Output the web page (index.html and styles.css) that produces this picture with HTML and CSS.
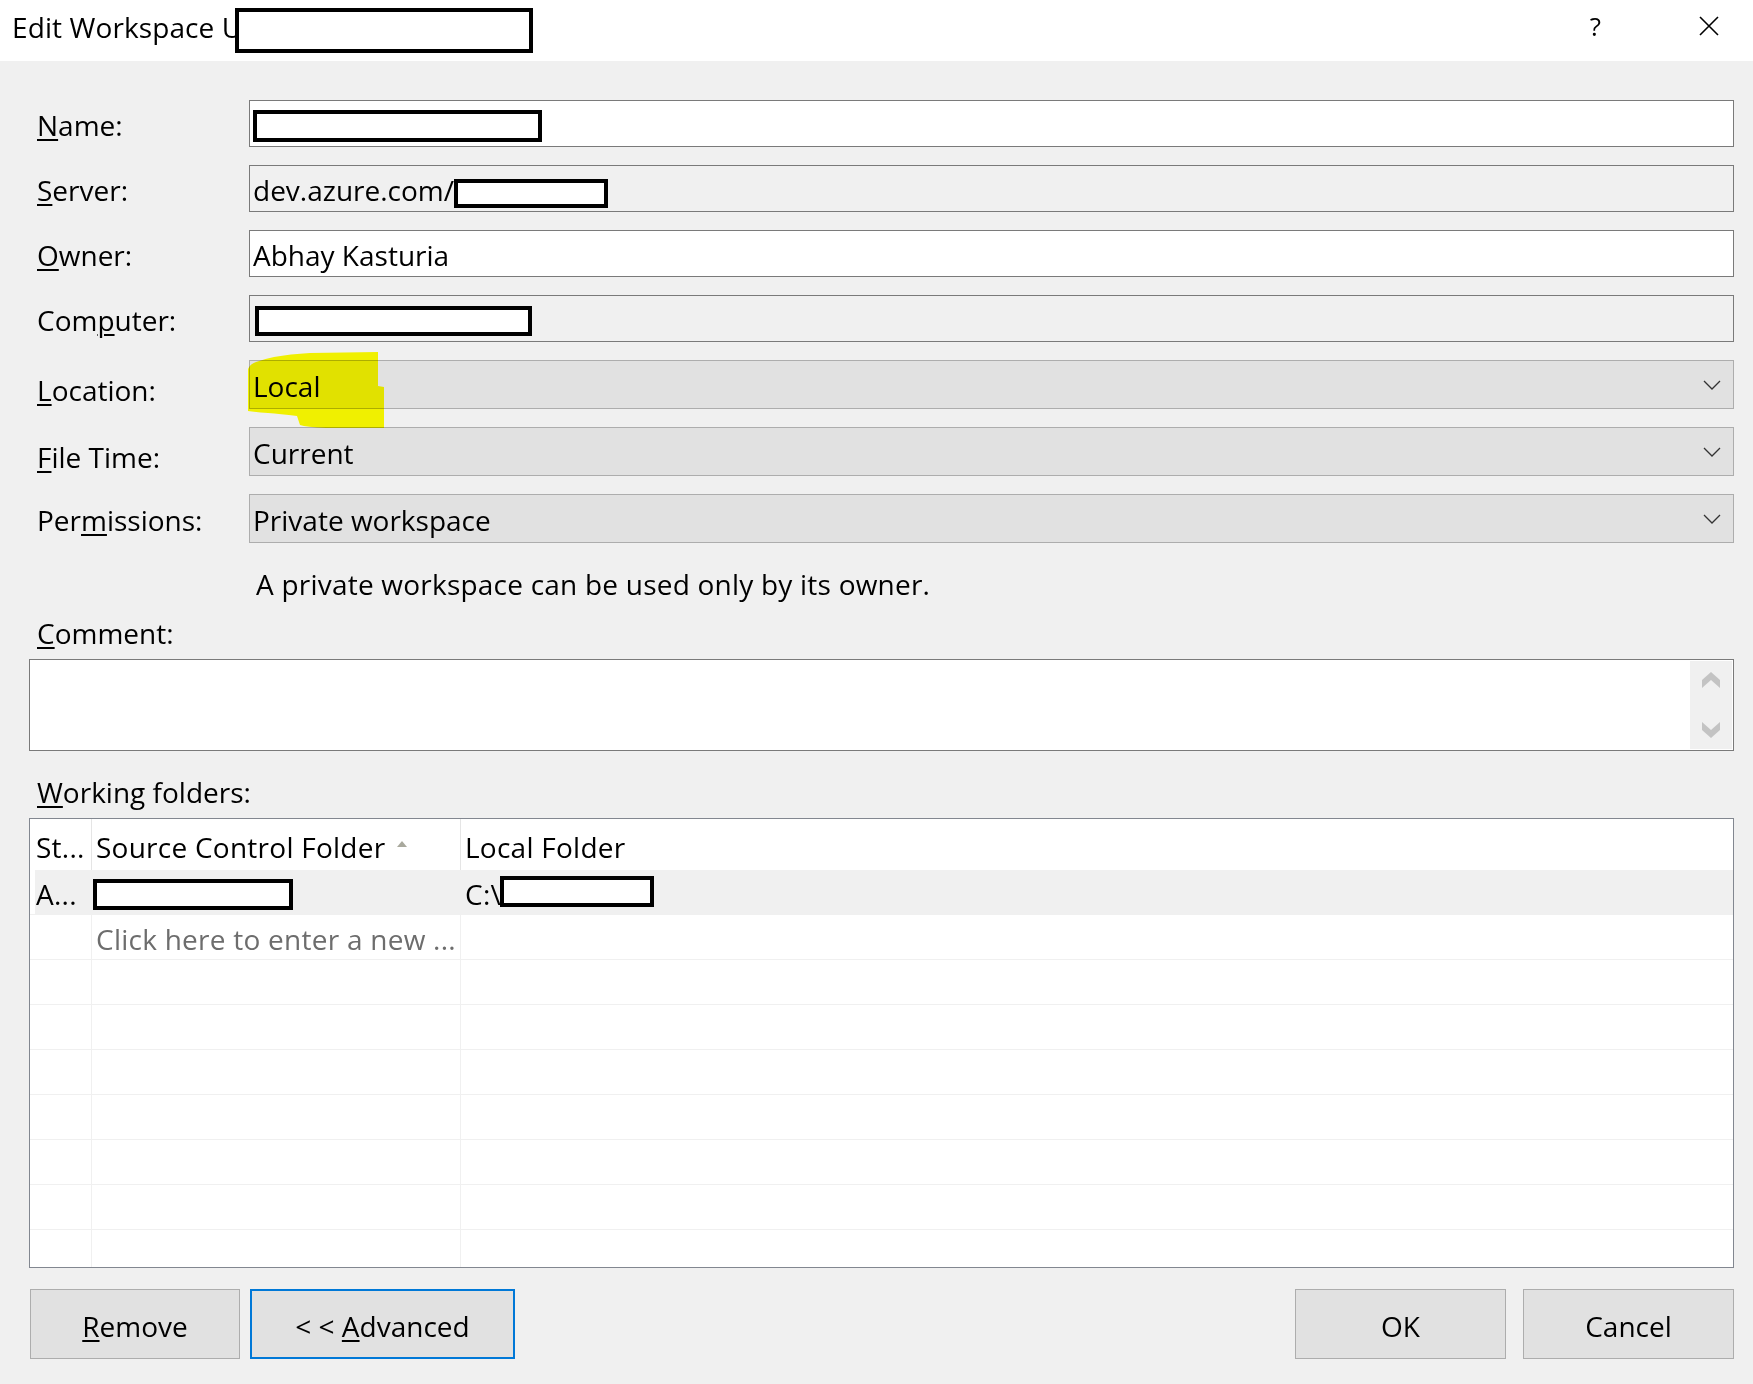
FILE: index.html
```html
<!DOCTYPE html>
<html lang="en">
<head>
<meta charset="utf-8">
<title>Edit Workspace</title>
<link rel="stylesheet" href="styles.css">
</head>
<body>
<div class="titlebar">
  <div class="title">Edit Workspace U</div>
  <span class="redact title-redact"></span>
  <div class="title-controls">
    <span class="help">?</span>
    <svg class="close" width="20" height="20" viewBox="0 0 20 20"><path d="M1 1 L19 19 M19 1 L1 19" stroke="#000" stroke-width="1.6" fill="none"/></svg>
  </div>
</div>

<div class="content">
  <div class="form">
    <div class="row">
      <div class="label"><u>N</u>ame:</div>
      <div class="field"><span class="redact name-redact"></span></div>
    </div>
    <div class="row">
      <div class="label"><u>S</u>erver:</div>
      <div class="field disabled"><span>dev.azure.com/</span><span class="redact server-redact"></span></div>
    </div>
    <div class="row">
      <div class="label"><u>O</u>wner:</div>
      <div class="field"><span>Abhay Kasturia</span></div>
    </div>
    <div class="row">
      <div class="label">Com<u>p</u>uter:</div>
      <div class="field disabled"><span class="redact computer-redact"></span></div>
    </div>
    <div class="row">
      <div class="label label-low"><u>L</u>ocation:</div>
      <div class="combo"><span>Local</span><svg class="chev" width="18" height="10" viewBox="0 0 18 10"><path d="M1 1 L9 9 L17 1" stroke="#333" stroke-width="1.3" fill="none"/></svg></div>
    </div>
    <div class="row">
      <div class="label label-low"><u>F</u>ile Time:</div>
      <div class="combo"><span>Current</span><svg class="chev" width="18" height="10" viewBox="0 0 18 10"><path d="M1 1 L9 9 L17 1" stroke="#333" stroke-width="1.3" fill="none"/></svg></div>
    </div>
    <div class="row">
      <div class="label">Per<u>m</u>issions:</div>
      <div class="combo"><span>Private workspace</span><svg class="chev" width="18" height="10" viewBox="0 0 18 10"><path d="M1 1 L9 9 L17 1" stroke="#333" stroke-width="1.3" fill="none"/></svg></div>
    </div>
  </div>

  <div class="desc">A private workspace can be used only by its owner.</div>

  <div class="section-label comment-label"><u>C</u>omment:</div>
  <div class="comment">
    <div class="scrollbar">
      <svg width="18" height="17" viewBox="0 0 18 17"><polygon points="0,8 9,0 18,8 18,16 9,8 0,16" fill="#c3c3c3"/></svg>
      <svg width="18" height="17" viewBox="0 0 18 17"><polygon points="0,1 9,9 18,1 18,9 9,17 0,9" fill="#c3c3c3"/></svg>
    </div>
  </div>

  <div class="section-label working-label"><u>W</u>orking folders:</div>
  <div class="grid">
    <div class="grid-head">
      <div class="cell c1">St...</div>
      <div class="cell c2">Source Control Folder<svg class="sort" width="10" height="6" viewBox="0 0 10 6"><polygon points="0,6 5,0 10,6" fill="#a9a99d"/></svg></div>
      <div class="cell c3">Local Folder</div>
    </div>
    <div class="grow sel">
      <div class="cell c1">A...</div>
      <div class="cell c2"><span class="redact src-redact"></span></div>
      <div class="cell c3"><span>C:\</span><span class="redact local-redact"></span></div>
    </div>
    <div class="grow">
      <div class="cell c1"></div>
      <div class="cell c2 hint">Click here to enter a new ...</div>
      <div class="cell c3"></div>
    </div>
    <div class="grow"><div class="cell c1"></div><div class="cell c2"></div><div class="cell c3"></div></div>
    <div class="grow"><div class="cell c1"></div><div class="cell c2"></div><div class="cell c3"></div></div>
    <div class="grow"><div class="cell c1"></div><div class="cell c2"></div><div class="cell c3"></div></div>
    <div class="grow"><div class="cell c1"></div><div class="cell c2"></div><div class="cell c3"></div></div>
    <div class="grow"><div class="cell c1"></div><div class="cell c2"></div><div class="cell c3"></div></div>
    <div class="grow"><div class="cell c1"></div><div class="cell c2"></div><div class="cell c3"></div></div>
    <div class="grow filler"><div class="cell c1"></div><div class="cell c2"></div><div class="cell c3"></div></div>
  </div>

  <div class="buttons">
    <button class="btn remove"><span><u>R</u>emove</span></button>
    <button class="btn advanced"><span>&lt; &lt; <u>A</u>dvanced</span></button>
    <button class="btn ok"><span>OK</span></button>
    <button class="btn cancel"><span>Cancel</span></button>
  </div>
</div>

<svg class="highlight" width="150" height="90" viewBox="0 0 150 90">
  <path d="M8 66 L8 24 Q10 19 16 17 Q24 14 34 12 Q50 9 70 8 L138 7 L138 41 L144 42 L144 83 L86 83 Q66 82 60 80 L57 71 Q40 69 28 68 Q16 67 8 66 Z" fill="#ffff00"/>
</svg>
</body>
</html>
```

FILE: styles.css
```css
html, body {
  margin: 0;
  padding: 0;
}

body {
  width: 1753px;
  height: 1384px;
  overflow: hidden;
  background: #f0f0f0;
  font-family: "Open Sans", "Noto Sans", sans-serif;
  font-size: 28px;
  color: #000;
  position: relative;
}

u {
  text-decoration-thickness: 2px;
  text-underline-offset: 3px;
}

/* Title bar */
.titlebar {
  height: 61px;
  background: #fff;
  display: flex;
  align-items: flex-start;
  position: relative;
}

.title {
  padding: 8px 0 0 12px;
  line-height: 38px;
  white-space: nowrap;
  letter-spacing: 0.1px;
}

.redact {
  display: inline-block;
  box-sizing: border-box;
  border: 4px solid #000;
  background: #fff;
  flex: none;
}

.title-redact {
  position: absolute;
  left: 235px;
  top: 8px;
  width: 298px;
  height: 45px;
}

.title-controls {
  margin-left: auto;
  display: flex;
  align-items: flex-start;
  padding-top: 16px;
  padding-right: 34px;
}

.help {
  font-size: 26px;
  line-height: 20px;
  margin-right: 98px;
}

.close {
  display: block;
}

/* Content */
.content {
  padding: 39px 19px 0 29px;
}

.row {
  display: grid;
  grid-template-columns: 220px 1fr;
  align-items: center;
  margin-bottom: 18px;
}

.row:last-child {
  margin-bottom: 0;
}

.label {
  padding-left: 8px;
  padding-top: 3px;
  line-height: 38px;
  white-space: nowrap;
}

.label.label-low {
  padding-top: 10px;
}

.field {
  height: 47px;
  box-sizing: border-box;
  border: 1px solid #7a7a7a;
  background: #fff;
  display: flex;
  align-items: center;
  padding: 3px 0 0 3px;
  line-height: 38px;
  white-space: nowrap;
}

.field.disabled {
  background: #f0f0f0;
}

.name-redact {
  width: 289px;
  height: 32px;
  margin-top: 1px;
}

.server-redact {
  width: 154px;
  height: 29px;
  margin-top: 6px;
}

.computer-redact {
  width: 277px;
  height: 30px;
  margin-left: 2px;
  margin-top: 1px;
}

.combo {
  height: 49px;
  box-sizing: border-box;
  border: 1px solid #adadad;
  background: #e1e1e1;
  display: flex;
  align-items: center;
  padding: 2px 12px 0 3px;
  line-height: 38px;
  white-space: nowrap;
}

.chev {
  margin-left: auto;
  margin-top: -2px;
  display: block;
}

.desc {
  margin-top: 21px;
  padding-left: 227px;
  line-height: 40px;
  letter-spacing: 0.22px;
}

.section-label {
  padding-left: 8px;
  line-height: 40px;
}

.comment-label {
  margin-top: 9px;
}

.comment {
  margin-top: 6px;
  height: 92px;
  box-sizing: border-box;
  border: 1px solid #7a7a7a;
  background: #fff;
  display: flex;
  justify-content: flex-end;
  padding: 1px;
}

.scrollbar {
  width: 42px;
  background: #f0f0f0;
  display: flex;
  flex-direction: column;
  justify-content: space-between;
  align-items: center;
  padding: 11px 0 11px;
  box-sizing: border-box;
}

.scrollbar svg {
  display: block;
}

.working-label {
  margin-top: 21px;
}

/* Grid */
.grid {
  margin-top: 6px;
  height: 450px;
  box-sizing: border-box;
  border: 1px solid #828790;
  background: #fff;
  display: flex;
  flex-direction: column;
}

.grid-head {
  height: 51px;
  display: flex;
  flex: none;
}

.cell {
  box-sizing: border-box;
  display: flex;
  align-items: center;
  line-height: 38px;
  white-space: nowrap;
  overflow: hidden;
  letter-spacing: 0.25px;
}

.c1 {
  width: 62px;
  padding-left: 6px;
  border-right: 1px solid #f0f0f0;
  flex: none;
}

.c2 {
  width: 369px;
  padding-left: 4px;
  border-right: 1px solid #f0f0f0;
  flex: none;
}

.c3 {
  flex: 1;
  padding-left: 4px;
}

.grid-head .cell {
  padding-top: 5px;
}

.grid-head .c1,
.grid-head .c2 {
  border-right-color: #e5e5e5;
}

.sort {
  margin-left: 12px;
  margin-top: -6px;
  display: block;
}

.grow {
  height: 45px;
  box-sizing: border-box;
  border-bottom: 1px solid #f0f0f0;
  display: flex;
  flex: none;
}

.grow .cell {
  padding-top: 3px;
}

.grow.sel {
  background: linear-gradient(90deg, transparent 5px, #f0f0f0 5px);
}

.grow.filler {
  flex: 1;
  border-bottom: none;
}

.hint {
  color: #6d6d6d;
}

.src-redact {
  width: 200px;
  height: 31px;
  margin-left: -3px;
  margin-top: 2px;
}

.local-redact {
  width: 154px;
  height: 31px;
  margin-left: -1px;
  margin-top: -5px;
}

/* Buttons */
.buttons {
  margin-top: 21px;
  display: flex;
  padding-left: 1px;
}

.btn {
  height: 70px;
  box-sizing: border-box;
  border: 1px solid #adadad;
  background: #e1e1e1;
  font-family: inherit;
  font-size: 28px;
  color: #000;
  display: flex;
  align-items: center;
  justify-content: center;
  padding: 3px 0 0;
  line-height: 38px;
  margin: 0;
}

.remove {
  width: 210px;
}

.advanced {
  width: 265px;
  margin-left: 10px;
  border: 2px solid #0078d7;
}

.ok {
  width: 211px;
  margin-left: auto;
}

.cancel {
  width: 211px;
  margin-left: 17px;
}

/* Highlighter mark over the Location value */
.highlight {
  position: absolute;
  left: 240px;
  top: 345px;
  mix-blend-mode: multiply;
  pointer-events: none;
}
```
